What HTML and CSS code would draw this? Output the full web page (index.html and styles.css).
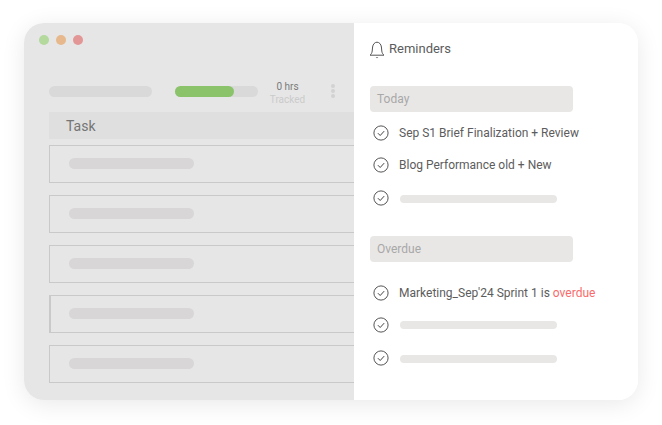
FILE: index.html
```html
<!DOCTYPE html>
<html lang="en">
<head>
<meta charset="utf-8">
<title>Reminders</title>
<link rel="stylesheet" href="styles.css">
</head>
<body>
<svg class="defs" width="0" height="0" aria-hidden="true">
  <symbol id="check" viewBox="0 0 16 16">
    <circle cx="8" cy="8" r="7.1" fill="none" stroke="#555" stroke-width="1"/>
    <path d="M4.9 8.2l2.3 2.3 4-4.4" fill="none" stroke="#444" stroke-width="1"/>
  </symbol>
</svg>
<main class="window">
  <section class="tasks">
    <div class="dots">
      <span class="dot dot-green"></span>
      <span class="dot dot-orange"></span>
      <span class="dot dot-red"></span>
    </div>
    <div class="toolbar">
      <span class="pill toolbar-pill"></span>
      <span class="progress"><span class="progress-fill"></span></span>
      <div class="tracked">
        <span class="hrs">0 hrs</span>
        <span class="tracked-label">Tracked</span>
      </div>
      <div class="kebab"><i></i><i></i><i></i></div>
    </div>
    <div class="task-head">Task</div>
    <div class="rows">
      <div class="row"><span class="pill row-pill"></span></div>
      <div class="row"><span class="pill row-pill"></span></div>
      <div class="row"><span class="pill row-pill"></span></div>
      <div class="row row-active"><span class="pill row-pill"></span></div>
      <div class="row"><span class="pill row-pill"></span></div>
    </div>
  </section>
  <aside class="reminders">
    <h1 class="title">
      <svg class="bell" viewBox="0 0 16 18" aria-hidden="true">
        <path d="M1 14.2h14c-1.300-1-2-2.400-2.200-4.200l-.4-4C12.100 3.300 10.300 1.200 8 1.200S3.900 3.300 3.600 6l-.4 4C3 11.800 2.300 13.200 1 14.200z" fill="none" stroke="#555" stroke-width="1"/>
        <path d="M6.600 16.300h2.800L8 17.300z" fill="#555"/>
      </svg>
      Reminders
    </h1>
    <div class="band band-today">Today</div>
    <ul class="list list-today">
      <li><svg class="check"><use href="#check"/></svg>Sep S1 Brief Finalization + Review</li>
      <li><svg class="check"><use href="#check"/></svg>Blog Performance old + New</li>
      <li><svg class="check"><use href="#check"/></svg><span class="line"></span></li>
    </ul>
    <div class="band band-overdue">Overdue</div>
    <ul class="list list-overdue">
      <li><svg class="check"><use href="#check"/></svg><span>Marketing_Sep'24 Sprint 1 is <em>overdue</em></span></li>
      <li><svg class="check"><use href="#check"/></svg><span class="line"></span></li>
      <li><svg class="check"><use href="#check"/></svg><span class="line"></span></li>
    </ul>
  </aside>
</main>
</body>
</html>
```
FILE: styles.css
```css
* { box-sizing: border-box; }
html, body { margin: 0; height: 425px; overflow: hidden; background: #fff; }
body { padding: 23px 24px 25px; font-family: Roboto, "Liberation Sans", sans-serif; }
.defs { position: absolute; }

.window {
  display: flex;
  height: 377px;
  border-radius: 20px;
  overflow: hidden;
  box-shadow: 0 4px 24px rgba(0, 0, 0, .09);
}

.tasks { width: 330px; flex: none; background: #e6e6e6; padding: 12px 0 0 25px; }

.dots { display: flex; gap: 7px; margin-left: -10px; }
.dot { width: 10px; height: 10px; border-radius: 50%; }
.dot-green { background: #b3d99c; }
.dot-orange { background: #e6b88c; }
.dot-red { background: #e39696; }

.toolbar { display: flex; align-items: flex-start; height: 36px; margin-top: 30px; }
.pill { display: block; background: #d8d6d6; border-radius: 6px; }
.toolbar-pill { width: 103px; height: 11px; margin-top: 11px; background: #d9d9d9; }
.progress { width: 83px; height: 11px; margin: 11px 0 0 23px; background: #d9d9d9; border-radius: 6px; display: block; }
.progress-fill { display: block; width: 59px; height: 11px; background: #8bc36b; border-radius: 6px; }
.tracked { width: 59px; display: flex; flex-direction: column; align-items: center; font-size: 10px; line-height: 13px; margin-top: 5px; }
.hrs { color: #7a7a7a; }
.tracked-label { color: #cbcbcb; }
.kebab { display: flex; flex-direction: column; gap: 1px; margin: 9px 0 0 14px; }
.kebab i { width: 4px; height: 4px; border-radius: 50%; background: #d2d2d2; }

.task-head { height: 27px; margin-top: 1px; background: #dfdfdf; padding-left: 17px; font-size: 14px; line-height: 28px; color: #757575; }

.rows { display: flex; flex-direction: column; gap: 12px; margin-top: 6px; }
.row { height: 38px; border: 1px solid #c9c9c9; border-right: 0; padding: 12px 0 0 19px; }
.row-active { border-left-width: 2px; padding-left: 18px; }
.row-pill { width: 125px; height: 11px; }

.reminders { flex: 1; background: #fff; padding: 0 0 0 16px; }
.title { display: flex; align-items: flex-start; gap: 4px; height: 18px; margin: 16px 0 0; font-size: 13px; line-height: 20px; font-weight: 400; color: #5c5c5c; }
.bell { width: 16px; height: 18px; flex: none; margin: 2px 0 0 -1px; }

.band { width: 203px; height: 26px; background: #e8e7e6; border-radius: 4px; padding-left: 7px; font-size: 12px; line-height: 27px; color: #a8a8a8; }
.band-today { margin-top: 29px; }
.band-overdue { margin-top: 22px; }

.list { list-style: none; margin: 0; padding: 5px 0 0 3px; }
.list-overdue { padding-top: 15px; }
.list li { display: flex; align-items: center; height: 32px; font-size: 12px; color: #5c5c5c; }
.list li:last-child { height: 33px; }
.list li:last-child .line { margin-top: 2px; }
.check { width: 16px; height: 16px; flex: none; margin-right: 10px; }
.line { display: block; width: 157px; height: 8px; margin-left: 1px; background: #e8e7e6; border-radius: 4px; }
em { font-style: normal; color: #f96b6b; }
```
